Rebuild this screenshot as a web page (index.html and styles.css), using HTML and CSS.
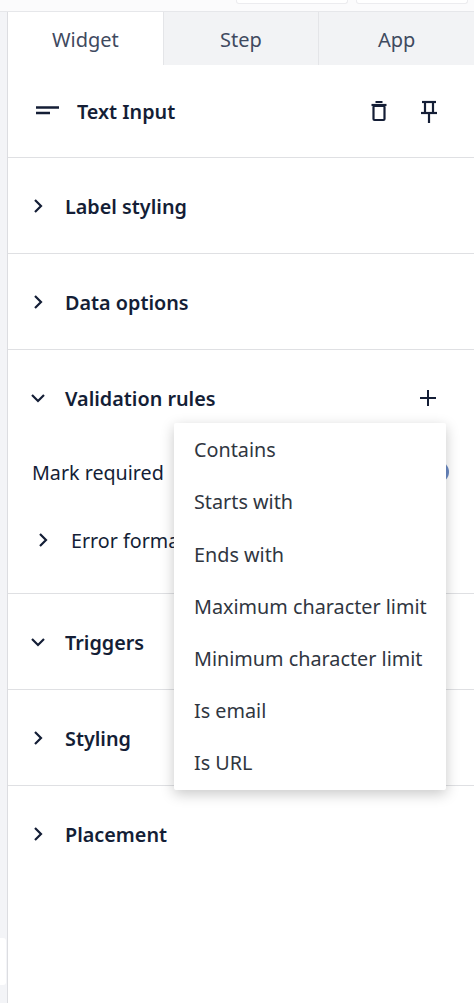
FILE: index.html
```html
<!DOCTYPE html>
<html lang="en">
<head>
    <meta charset="UTF-8">
    <meta name="viewport" content="width=device-width, initial-scale=1.0">
    <title>Inspector</title>
    <link rel="stylesheet" href="styles.css">
</head>
<body>
    <div class="topbar">
        <div class="topbar-btn"></div>
        <div class="topbar-btn"></div>
    </div>
    <div class="main">
        <div class="rail">
            <div class="rail-card"></div>
        </div>
        <div class="panel">
            <div class="tabs">
                <div class="tab active">Widget</div>
                <div class="tab">Step</div>
                <div class="tab">App</div>
            </div>

            <div class="title-row">
                <svg class="title-icon" width="24" height="12" viewBox="0 0 24 12">
                    <path d="M1 3.5H24M1 9H15" fill="none" stroke="#141e36" stroke-width="2.4"/>
                </svg>
                <span class="title-text">Text Input</span>
                <div class="title-actions">
                    <svg width="16" height="22" viewBox="0 0 16 22" fill="none" stroke="#141e36" stroke-width="2.2">
                        <path d="M0.5 5H15.5"/>
                        <path d="M4.5 2H11.5" stroke-width="2"/>
                        <rect x="2.5" y="6" width="11" height="14" rx="1"/>
                    </svg>
                    <svg width="18" height="23" viewBox="0 0 18 23" fill="none" stroke="#141e36" stroke-width="2.2">
                        <path d="M2 2H16"/>
                        <path d="M5 2V12M13 2V12"/>
                        <path d="M1 13H17"/>
                        <path d="M9 13V23"/>
                    </svg>
                </div>
            </div>

            <div class="section">
                <div class="section-head">
                    <svg class="chev" width="10" height="16" viewBox="0 0 10 16"><path d="M2 2L8 8L2 14"/></svg>
                    <span>Label styling</span>
                </div>
            </div>
            <div class="section">
                <div class="section-head">
                    <svg class="chev" width="10" height="16" viewBox="0 0 10 16"><path d="M2 2L8 8L2 14"/></svg>
                    <span>Data options</span>
                </div>
            </div>
            <div class="section">
                <div class="section-head">
                    <svg class="chev-down" width="16" height="10" viewBox="0 0 16 10"><path d="M2 2L8 8L14 2"/></svg>
                    <span>Validation rules</span>
                    <svg class="plus" width="16" height="16" viewBox="0 0 16 16"><path d="M8 0V16M0 8H16"/></svg>
                </div>
                <div class="section-body">
                    <div class="field-row">
                        <span>Mark required</span>
                        <div class="toggle"></div>
                    </div>
                    <div class="sub-row">
                        <svg class="chev" width="10" height="16" viewBox="0 0 10 16"><path d="M2 2L8 8L2 14"/></svg>
                        <span>Error formatting</span>
                    </div>
                </div>
            </div>
            <div class="section">
                <div class="section-head">
                    <svg class="chev-down" width="16" height="10" viewBox="0 0 16 10"><path d="M2 2L8 8L14 2"/></svg>
                    <span>Triggers</span>
                </div>
            </div>
            <div class="section">
                <div class="section-head">
                    <svg class="chev" width="10" height="16" viewBox="0 0 10 16"><path d="M2 2L8 8L2 14"/></svg>
                    <span>Styling</span>
                </div>
            </div>
            <div class="section last">
                <div class="section-head">
                    <svg class="chev" width="10" height="16" viewBox="0 0 10 16"><path d="M2 2L8 8L2 14"/></svg>
                    <span>Placement</span>
                </div>
            </div>

            <div class="menu">
                <div class="menu-item">Contains</div>
                <div class="menu-item">Starts with</div>
                <div class="menu-item">Ends with</div>
                <div class="menu-item">Maximum character limit</div>
                <div class="menu-item">Minimum character limit</div>
                <div class="menu-item">Is email</div>
                <div class="menu-item">Is URL</div>
            </div>
        </div>
    </div>
</body>
</html>
```

FILE: styles.css
```css
body {
    font-family: "Noto Sans", Arial, sans-serif;
    background-color: #fff;
    color: #141e36;
    margin: 0;
    height: 1003px;
    overflow: hidden;
    display: flex;
    flex-direction: column;
}
.topbar {
    height: 12px;
    flex-shrink: 0;
    display: flex;
    justify-content: flex-end;
    gap: 8px;
    padding-right: 6px;
    box-sizing: border-box;
    background-color: #fbfbfc;
    border-bottom: 1px solid #e6e7ea;
}
.topbar-btn {
    width: 110px;
    height: 3px;
    background-color: #fff;
    border: 1px solid #ececef;
    border-top: none;
    border-radius: 0 0 3px 3px;
}
.main {
    flex: 1;
    display: flex;
    min-height: 0;
}
.rail {
    width: 7px;
    flex-shrink: 0;
    background-color: #f3f4f7;
    border-right: 1px solid #dcdde1;
    padding-top: 926px;
}
.rail-card {
    width: 6px;
    height: 47px;
    background-color: #fff;
    border-radius: 0 3px 3px 0;
}
.panel {
    flex: 1;
    position: relative;
}
.tabs {
    display: flex;
    height: 53px;
}
.tab {
    flex: 1;
    display: flex;
    align-items: center;
    justify-content: center;
    font-size: 20px;
    padding-top: 2px;
    box-sizing: border-box;
    color: #3f4a5f;
    background-color: #f2f3f5;
    border-left: 1px solid #e4e5e8;
}
.tab.active {
    background-color: #fff;
    border-left: none;
}
.title-row {
    height: 92px;
    display: flex;
    align-items: center;
    border-bottom: 1px solid #dfe0e3;
    padding: 0 36px 0 27px;
}
.title-icon {
    margin-right: 18px;
    margin-top: -2px;
}
.title-text {
    font-size: 19.8px;
    font-weight: 600;
    padding-top: 1px;
}
.title-actions {
    margin-left: auto;
    display: flex;
    align-items: center;
    gap: 33px;
}
.section {
    border-bottom: 1px solid #dfe0e3;
    padding: 0 38px 0 24px;
}
.section.last {
    border-bottom: none;
}
.section-head {
    height: 95px;
    box-sizing: border-box;
    padding-top: 1px;
    display: flex;
    align-items: center;
    font-size: 19.8px;
    font-weight: 600;
}
.chev, .chev-down {
    fill: none;
    stroke: #141e36;
    stroke-width: 2.2;
    flex-shrink: 0;
}
.section-head .chev {
    margin-left: 1px;
    margin-right: 22px;
}
.section-head .chev-down {
    margin-left: -2px;
    margin-right: 19px;
}
.plus {
    margin-left: auto;
    fill: none;
    stroke: #141e36;
    stroke-width: 2;
}
.section-body {
    padding-bottom: 12px;
    font-size: 19.7px;
}
.field-row {
    height: 54px;
    display: flex;
    align-items: center;
    justify-content: space-between;
    margin-right: -13px;
}
.toggle {
    width: 40px;
    height: 22px;
    border-radius: 11px;
    background-color: #6a8ac4;
}
.sub-row {
    height: 82px;
    display: flex;
    align-items: center;
    padding-left: 6px;
}
.sub-row .chev {
    margin-right: 23px;
}
.menu {
    position: absolute;
    top: 411px;
    left: 166px;
    width: 272px;
    background-color: #fff;
    border-radius: 2px;
    box-shadow: 0 4px 14px rgba(0, 0, 0, 0.22);
    padding-top: 0.6px;
    padding-bottom: 1.4px;
}
.menu-item {
    height: 52.2px;
    display: flex;
    align-items: center;
    padding-left: 20px;
    font-size: 19.8px;
    color: #30363f;
    white-space: nowrap;
}
```
